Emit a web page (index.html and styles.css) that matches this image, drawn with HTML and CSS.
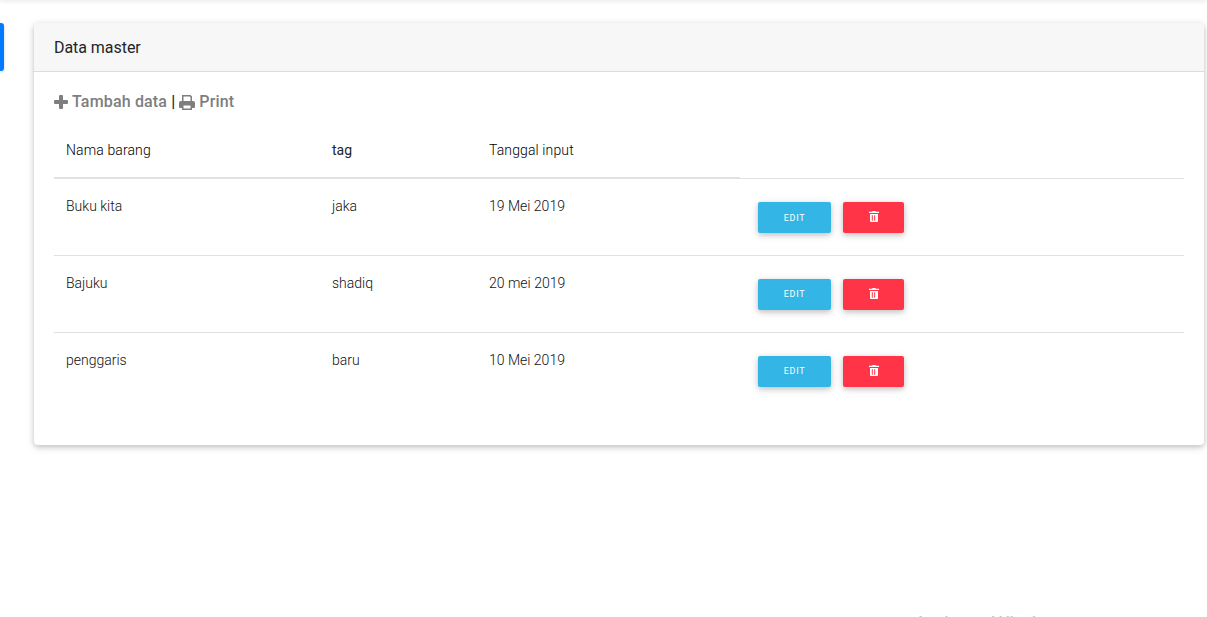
FILE: index.html
```html
<!DOCTYPE html>
<html lang="id">
<head>
<meta charset="utf-8">
<title>Data master</title>
<link rel="stylesheet" href="styles.css">
</head>
<body>
<div class="topbar"></div>
<div class="layout">
  <div class="side-tab"></div>
  <section class="card">
    <header class="card-header">Data master</header>
    <div class="card-body">
      <p class="toolbar">
        <a class="tool" href="#"><svg class="ico-plus" viewBox="0 0 14 14"><path d="M5 1a1 1 0 0 1 1-1h2a1 1 0 0 1 1 1v4h4a1 1 0 0 1 1 1v2a1 1 0 0 1-1 1H9v4a1 1 0 0 1-1 1H6a1 1 0 0 1-1-1V9H1a1 1 0 0 1-1-1V6a1 1 0 0 1 1-1h4z"/></svg>Tambah data</a><span class="sep">|</span><a class="tool" href="#"><svg class="ico-print" viewBox="0 0 16 15"><path fill-rule="evenodd" d="M3 0h8.500L13 1.500V6h1a2 2 0 0 1 2 2v4a1 1 0 0 1-1 1h-2v2H3v-2H1a1 1 0 0 1-1-1V8a2 2 0 0 1 2-2h1zM4.500 1.500V6h7V2.200l-.7-.7zM4.500 10.500v3h7v-3z"/></svg>Print</a>
      </p>
      <table class="data-table">
        <colgroup>
          <col class="c1"><col class="c2"><col class="c3"><col class="c4"><col>
        </colgroup>
        <thead>
          <tr><th>Nama barang</th><th class="strong">tag</th><th>Tanggal input</th><th></th><th class="no-rule"></th></tr>
        </thead>
        <tbody>
          <tr>
            <td>Buku kita</td><td>jaka</td><td>19 Mei 2019</td>
            <td colspan="2"><div class="actions"><button class="btn btn-edit">EDIT</button><button class="btn btn-del"><svg class="ico-trash" viewBox="0 0 10 11"><path d="M3.500 0h3l.4.8H10V2H0V.8h3.100zM1 3h8v7a1 1 0 0 1-1 1H2a1 1 0 0 1-1-1zm1.800 1.300v5.400h1V4.300zm2.400 0v5.400h1V4.300z" fill-rule="evenodd"/></svg></button></div></td>
          </tr>
          <tr>
            <td>Bajuku</td><td>shadiq</td><td>20 mei 2019</td>
            <td colspan="2"><div class="actions"><button class="btn btn-edit">EDIT</button><button class="btn btn-del"><svg class="ico-trash" viewBox="0 0 10 11"><path d="M3.500 0h3l.4.8H10V2H0V.8h3.100zM1 3h8v7a1 1 0 0 1-1 1H2a1 1 0 0 1-1-1zm1.800 1.300v5.400h1V4.300zm2.400 0v5.400h1V4.300z" fill-rule="evenodd"/></svg></button></div></td>
          </tr>
          <tr>
            <td>penggaris</td><td>baru</td><td>10 Mei 2019</td>
            <td colspan="2"><div class="actions"><button class="btn btn-edit">EDIT</button><button class="btn btn-del"><svg class="ico-trash" viewBox="0 0 10 11"><path d="M3.500 0h3l.4.8H10V2H0V.8h3.100zM1 3h8v7a1 1 0 0 1-1 1H2a1 1 0 0 1-1-1zm1.800 1.300v5.400h1V4.300zm2.400 0v5.400h1V4.300z" fill-rule="evenodd"/></svg></button></div></td>
          </tr>
        </tbody>
      </table>
    </div>
  </section>
</div>
<div class="watermark">Activate Windows</div>
</body>
</html>
```

FILE: styles.css
```css
* { box-sizing: border-box; }
html, body { height: 100%; }
body {
  margin: 0;
  background: #fff;
  font-family: Roboto, "Liberation Sans", sans-serif;
  font-weight: 300;
  font-size: 14px;
  color: #212529;
  overflow: hidden;
  position: relative;
}
.topbar {
  height: 0;
  box-shadow: 0 0 4px 1px rgba(0, 0, 0, .14);
}
.layout {
  display: flex;
  align-items: flex-start;
  padding: 23px 3px 0 0;
}
.side-tab {
  width: 4px;
  height: 48px;
  flex: none;
  background: #007bff;
  border-radius: 0 3px 3px 0;
  box-shadow: 0 1px 3px rgba(0, 0, 0, .2);
  margin-right: 30px;
}
.card {
  flex: 1;
  height: 422px;
  background: #fff;
  border-radius: 4px;
  box-shadow: 0 2px 5px rgba(0, 0, 0, .16), 0 2px 10px rgba(0, 0, 0, .12);
}
.card-header {
  height: 49px;
  padding: 0 20px;
  display: flex;
  align-items: center;
  font-size: 16px;
  font-weight: 400;
  letter-spacing: -.05px;
  background: #f7f7f7;
  border-bottom: 1px solid #dcdcdc;
  border-radius: 4px 4px 0 0;
}
.card-body { padding: 20px; }
.toolbar {
  margin: 0;
  height: 20px;
  line-height: 20px;
  font-size: 16px;
  font-weight: 500;
  letter-spacing: .16px;
  display: flex;
  align-items: center;
  white-space: pre;
}
.tool {
  color: #7e7e7e;
  text-decoration: none;
  display: inline-flex;
  align-items: center;
  gap: 4px;
}
.tool svg { fill: #7e7e7e; display: block; }
.ico-plus { width: 14px; height: 14px; }
.ico-print { width: 16px; height: 15px; }
.sep { margin: 0 4px; color: #212529; font-weight: 500; }
.data-table {
  width: 100%;
  margin-top: 14px;
  border-collapse: collapse;
  table-layout: fixed;
}
.c1 { width: 266px; }
.c2 { width: 157px; }
.c3 { width: 263px; }
.c4 { width: 0; }
.data-table th {
  height: 52px;
  padding: 0 12px 4px;
  text-align: left;
  font-size: 14px;
  font-weight: 300;
  letter-spacing: .12px;
  color: #000;
  border-bottom: 2px solid #dee2e6;
}
.data-table th.strong { font-weight: 400; letter-spacing: 0; color: #212529; }
.data-table th.no-rule { border-bottom: 1px solid #dee2e6; }
.data-table td {
  height: 77px;
  padding: 19px 12px 0;
  vertical-align: top;
  border-bottom: 1px solid #dee2e6;
  line-height: 17px;
  color: #111;
}
.data-table tbody tr:last-child td { border-bottom: 0; }
.actions {
  display: flex;
  gap: 12px;
  margin: 4px 0 0 6px;
}
.btn {
  height: 31px;
  border: 0;
  border-radius: 2px;
  color: #fff;
  display: flex;
  align-items: center;
  justify-content: center;
  padding: 0;
  font-family: Roboto, "Liberation Sans", sans-serif;
  font-size: 9px;
  font-weight: 400;
  letter-spacing: .7px;
  box-shadow: 0 2px 5px rgba(0, 0, 0, .16), 0 2px 10px rgba(0, 0, 0, .12);
}
.btn-edit { width: 73px; background: #33b5e5; }
.btn-del { width: 61px; background: #ff3547; }
.ico-trash { width: 10px; height: 11px; fill: #fff; display: block; margin-top: -2px; }
.watermark {
  position: absolute;
  left: 914px;
  top: 612px;
  font-size: 20px;
  font-weight: 400;
  line-height: 24px;
  color: #c4c4c4;
  white-space: nowrap;
}
```
